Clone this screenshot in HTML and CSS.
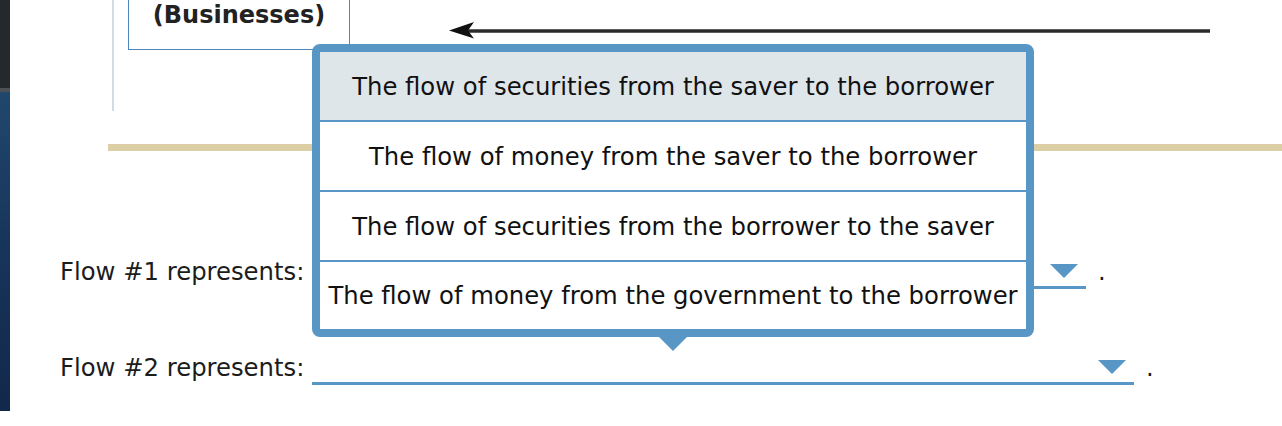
FILE: index.html
```html
<!DOCTYPE html>
<html>
<head>
<meta charset="utf-8">
<link rel="stylesheet" href="styles.css">
</head>
<body>
<div class="page">
  <div class="strip">
    <div class="strip-top"></div>
    <div class="strip-sep"></div>
    <div class="strip-blue"></div>
  </div>
  <div class="main">
    <div class="diagram">
      <div class="entity">(Businesses)</div>
      <svg class="arrow" width="764" height="20" viewBox="0 0 764 20">
        <line x1="18" y1="11" x2="762" y2="11" stroke="#2a2a2a" stroke-width="3.5"/>
        <polygon points="1,10.5 26,2 20,10.5 26,18.5" fill="#111"/>
      </svg>
    </div>
    <div class="rule"></div>
    <div class="form">
      <div class="row">
        <span class="label">Flow #1 represents:</span>
        <div class="select s1"><span class="caret"></span></div>
        <span class="dot">.</span>
      </div>
      <div class="row">
        <span class="label">Flow #2 represents:</span>
        <div class="select s2"><span class="caret"></span></div>
        <span class="dot">.</span>
      </div>
    </div>
    <ul class="menu">
      <li class="opt active">The flow of securities from the saver to the borrower</li>
      <li class="opt">The flow of money from the saver to the borrower</li>
      <li class="opt">The flow of securities from the borrower to the saver</li>
      <li class="opt last">The flow of money from the government to the borrower</li>
    </ul>
  </div>
</div>
</body>
</html>
```

FILE: styles.css
```css
html, body {
  margin: 0;
  padding: 0;
  background: #ffffff;
}
body {
  font-family: "DejaVu Sans", Verdana, sans-serif;
  font-size: 24.3px;
  color: #1a1a1a;
  width: 1282px;
  height: 426px;
  overflow: hidden;
}
.page {
  display: flex;
  align-items: flex-start;
}
.strip {
  width: 10px;
  height: 411px;
  display: flex;
  flex-direction: column;
  flex-shrink: 0;
}
.strip-top {
  height: 88px;
  background: #24292d;
}
.strip-sep {
  height: 4px;
  background: #4d5155;
}
.strip-blue {
  flex: 1;
  background: linear-gradient(#21476d, #17345a 50%, #12284a);
}
.main {
  flex: 1;
  position: relative;
}
.diagram {
  height: 111px;
  margin-left: 102px;
  border-left: 2px solid #d2dce7;
  display: flex;
  align-items: flex-start;
}
.entity {
  box-sizing: border-box;
  margin-left: 14px;
  margin-top: -12px;
  width: 222px;
  height: 62px;
  padding-top: 13px;
  border: 1px solid #4a86ba;
  border-width: 0 1.5px 1.5px 1.5px;
  font-weight: bold;
  font-size: 24px;
  line-height: 28px;
  text-align: center;
  color: #222;
}
.arrow {
  display: block;
  margin-left: 98px;
  margin-top: 20px;
}
.rule {
  margin-left: 98px;
  margin-top: 33px;
  height: 7px;
  background: #dccfa6;
}
.form {
  margin-top: 98px;
  display: flex;
  flex-direction: column;
  gap: 56px;
}
.row {
  display: flex;
  align-items: flex-end;
  height: 40px;
  margin-left: 50px;
}
.label, .dot {
  line-height: 28px;
  margin-bottom: 3px;
  color: #1c1c1c;
}
.label {
  width: 252px;
  flex-shrink: 0;
}
.select {
  position: relative;
  box-sizing: border-box;
  height: 34px;
  border-bottom: 3px solid #5896c6;
}
.s1 { width: 774px; }
.s2 { width: 822px; }
.caret {
  position: absolute;
  right: 8px;
  bottom: 8px;
  width: 0;
  height: 0;
  border-left: 14px solid transparent;
  border-right: 14px solid transparent;
  border-top: 14px solid #5896c6;
}
.dot {
  margin-left: 12px;
}
.menu {
  position: absolute;
  left: 302px;
  top: 44px;
  width: 722px;
  box-sizing: border-box;
  margin: 0;
  padding: 0;
  list-style: none;
  background: #ffffff;
  border: 8px solid #5896c6;
  border-radius: 8px;
}
.menu::after {
  content: "";
  position: absolute;
  top: calc(100% + 8px);
  left: calc(50% - 14px);
  width: 0;
  height: 0;
  border-left: 14px solid transparent;
  border-right: 14px solid transparent;
  border-top: 14px solid #5896c6;
}
.opt {
  height: 68px;
  display: flex;
  align-items: center;
  justify-content: center;
  text-align: center;
  color: #111;
  border-top: 2px solid #5896c6;
}
.opt.active {
  border-top: none;
  background: #dfe6ea;
}
.opt.last {
  height: 67px;
}
```
